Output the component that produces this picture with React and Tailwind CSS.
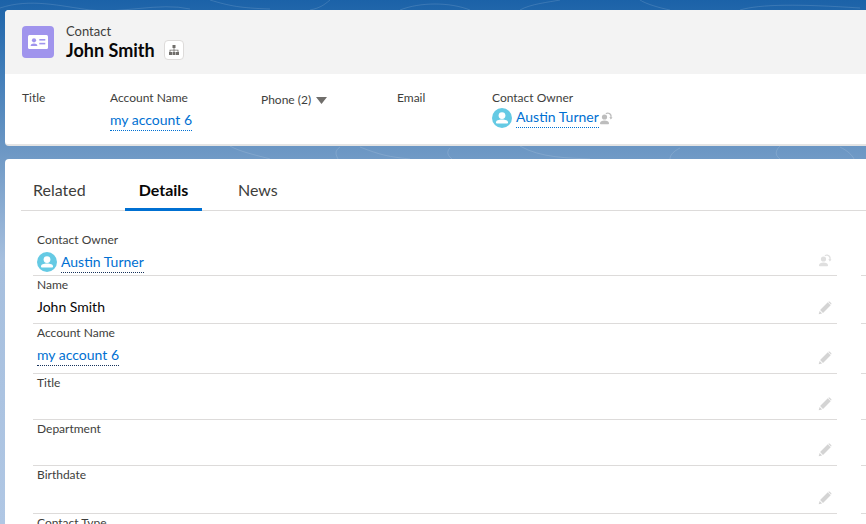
import { Fragment } from "react";

function Avatar() {
  return (
    <svg viewBox="0 0 20 20" className="w-5 h-5 shrink-0">
      <circle cx="10" cy="10" r="10" fill="#65cae4" />
      <circle cx="10" cy="7.6" r="3.4" fill="#fff" />
      <path d="M4 14.2c0-1.8 2.6-2.8 6-2.8s6 1 6 2.8v.6c0 .5-.4.8-.8.8H4.800c-.4 0-.8-.3-.8-.8z" fill="#fff" />
    </svg>
  );
}

function ChangeOwner({ color }) {
  return (
    <svg viewBox="0 0 14 14" className="w-[14px] h-[14px]" fill={color}>
      <circle cx="5.500" cy="6" r="2.600" />
      <path d="M1 12.200c0-1.600 2-2.600 4.500-2.600s4.500 1 4.500 2.600v.3c0 .4-.3.700-.7.700H1.700c-.4 0-.7-.3-.7-.7z" />
      <path d="M6.500 2.200c2-1.400 4.800-.7 5.800 1.400.4.900.5 1.800.2 2.700l1 .1-1.700 2-1.500-2.300 1 .1c.2-.7.100-1.300-.2-1.900-.7-1.400-2.400-1.900-3.800-1.100z" />
    </svg>
  );
}

function Pencil() {
  return (
    <svg viewBox="0 0 14 14" className="w-[14px] h-[14px]" fill="#d4d4d4">
      <path d="M9.800 1.300 12.700 4.200 5 11.900 2.100 9z" />
      <path d="M10.700.7c.3-.3.800-.3 1.100 0l1.500 1.500c.3.300.3.800 0 1.100l-.3.300L10.100 .7z" />
      <path d="M1.600 9.900 4.100 12.400.7 13.300z" />
    </svg>
  );
}

function Field({ label, value, link, avatar, height, owner }) {
  return (
    <div className={`flex ${height}`}>
      <div className="w-[804px] ml-[12px] shrink-0 border-b border-[#dddbda] pl-1 relative">
        <div className="text-[12px] leading-[18px] text-[#3e3e3c]">{label}</div>
        {value && (
          <div className="flex items-center gap-1 mt-[3px] h-5">
            {avatar && <Avatar />}
            <span
              className={
                link
                  ? "text-[14px] leading-5 text-[#0070d2] border-b border-dotted border-[#16325c]"
                  : "text-[14px] leading-5 text-[#080707]"
              }
            >
              {value}
            </span>
          </div>
        )}
        <div className="absolute right-[5px] bottom-[8px]">
          {owner ? <ChangeOwner color="#dfdfdf" /> : <Pencil />}
        </div>
      </div>
      <div className="ml-[24px] w-10 border-b border-[#dddbda]" />
    </div>
  );
}

const fields = [
  { label: "Contact Owner", value: "Austin Turner", link: true, avatar: true, owner: true, height: "h-[45px]" },
  { label: "Name", value: "John Smith", height: "h-[48px]" },
  { label: "Account Name", value: "my account 6", link: true, height: "h-[50px]" },
  { label: "Title", height: "h-[46px]" },
  { label: "Department", height: "h-[46px]" },
  { label: "Birthdate", height: "h-[48px]" },
  { label: "Contact Type", height: "h-[48px]" },
];

export default function App() {
  return (
    <div className="relative h-[524px] w-[866px] overflow-hidden bg-[linear-gradient(180deg,#1b62a8_0px,#3f7cb8_70px,#6c97c4_150px,#a6bfde_260px,#b0c7e4_524px)] font-['Lato','Open_Sans',sans-serif]">
      {/* swirl texture behind the cards */}
      <svg className="absolute inset-0 w-full h-full" viewBox="0 0 866 524" fill="none" stroke="#ffffff" strokeOpacity="0.13" strokeWidth="1">
        <path d="M0 8C30 -2 60 6 90 10S160 2 190 9" />
        <path d="M210 0c20 6 30 8 60 9M330 0c-6 5-10 8-20 10M400 10c20-8 50-8 70 0M520 10c10-6 30-8 40-10M640 0c6 4 20 8 30 10M740 10c20-6 60-6 120-2" />
        <path d="M230 146c10 6 30 10 40 13M360 147c20 8 30 10 50 12M520 146c20 12 50 12 70 13M340 147c-6 4-4 8-2 12M680 148c-8 4-10 8-10 11M780 146c-6 6-4 10 0 13M840 147c8 4 12 8 14 12M450 148c-4 4-2 8 2 11" />
      </svg>

      <div className="relative pl-[5px] pt-[10px] flex flex-col gap-[13px]">
        {/* highlights panel */}
        <div className="rounded-l-[4px] bg-white overflow-hidden h-[136px] border-b-2 border-[#e4e4e4]">
          <div className="h-[64px] bg-[#f3f3f3] flex items-center pl-[17px]">
            <div className="w-8 h-8 rounded-[4px] bg-[#a094ed] flex items-center justify-center">
              <svg viewBox="0 0 20 16" className="w-5 h-4">
                <rect x="0" y="1" width="20" height="14" rx="1.500" fill="#fff" />
                <circle cx="6" cy="6.300" r="2.100" fill="#a094ed" />
                <path d="M2.600 12c0-1.700 1.500-2.500 3.400-2.500s3.400.8 3.400 2.500z" fill="#a094ed" />
                <rect x="11.300" y="5" width="6" height="1.600" fill="#a094ed" />
                <rect x="11.300" y="8.800" width="6" height="1.600" fill="#a094ed" />
              </svg>
            </div>
            <div className="ml-3">
              <div className="text-[13px] leading-[15px] text-[#3e3e3c]">Contact</div>
              <div className="flex items-center gap-[9px] mt-[1px]">
                <span className="text-[18px] leading-[21px] font-bold text-[#080707]">John Smith</span>
                <span className="w-5 h-5 rounded-[4px] bg-white border border-[#dddbda] flex items-center justify-center">
                  <svg viewBox="0 0 12 12" className="w-3 h-3" fill="#706e6b">
                    <rect x="4.500" y="1" width="3" height="3" />
                    <rect x="1" y="8" width="3" height="3" />
                    <rect x="4.500" y="8" width="3" height="3" />
                    <rect x="8" y="8" width="3" height="3" />
                    <path d="M5.600 4h.8v1.700h4v2.300h-.8V6.500H6.400V8h-.8V6.500H2.400V8h-.8V5.700h4z" />
                  </svg>
                </span>
              </div>
            </div>
          </div>
          <div className="flex pl-[17px] pt-[15px]">
            <div className="w-[88px] text-[12px] leading-[18px] text-[#3e3e3c]">Title</div>
            <div className="w-[151px]">
              <div className="text-[12px] leading-[18px] text-[#3e3e3c]">Account Name</div>
              <span className="text-[14px] leading-5 inline-block text-[#0070d2] border-b border-dotted border-[#0070d2]">my account 6</span>
            </div>
            <div className="w-[136px] flex items-center h-[18px] mt-[2px] gap-[5px] text-[12px] text-[#3e3e3c]">
              Phone (2)
              <svg viewBox="0 0 11 7" className="w-[11px] h-[7px]" fill="#706e6b">
                <path d="M0 0h11L5.500 7z" />
              </svg>
            </div>
            <div className="w-[95px] text-[12px] leading-[18px] text-[#3e3e3c]">Email</div>
            <div>
              <div className="text-[12px] leading-[18px] text-[#3e3e3c]">Contact Owner</div>
              <div className="flex items-center gap-1">
                <Avatar />
                <span className="text-[14px] leading-5 text-[#0070d2] border-b border-dotted border-[#0070d2]">Austin Turner</span>
                <span className="-ml-1"><ChangeOwner color="#bdbdbd" /></span>
              </div>
            </div>
          </div>
        </div>

        {/* details panel */}
        <div className="rounded-tl-[4px] bg-white h-[400px] pl-4">
          <div className="flex h-[52px] border-b border-[#dddbda] text-[16px]">
            <div className="w-[104px] pl-3 pt-[21px] leading-5 text-[#3e3e3c]">Related</div>
            <div className="w-[77px] h-[52px] -ml-[0px] border-b-[3px] border-[#0070d2] text-center pt-[21px] leading-5 font-bold text-[#080707]">Details</div>
            <div className="ml-9 pt-[21px] leading-5 text-[#3e3e3c]">News</div>
          </div>
          <div className="pt-5">
            {fields.map((f) => (
              <Fragment key={f.label}>
                <Field {...f} />
              </Fragment>
            ))}
          </div>
        </div>
      </div>
    </div>
  );
}
